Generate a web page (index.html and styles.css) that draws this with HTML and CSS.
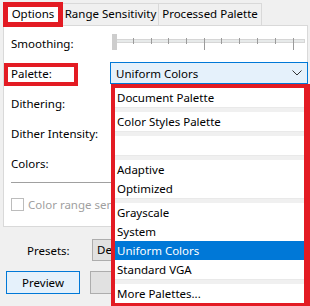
FILE: index.html
```html
<!DOCTYPE html>
<html lang="en">
<head>
  <meta charset="UTF-8" />
  <title>Indexed Color Options</title>
  <link rel="stylesheet" href="styles.css">
</head>
<body>
  <div class="dialog">
    <div class="tabs">
      <div class="tab tab-options active">Options</div>
      <div class="tab tab-range">Range Sensitivity</div>
      <div class="tab tab-processed">Processed Palette</div>
    </div>

    <div class="panel">
      <div class="row">
        <span class="label">Smoothing:</span>
        <svg class="slider" width="196" height="20" viewBox="0 0 196 20">
          <rect x="0.5" y="5.5" width="192" height="3" fill="#e7eaea" stroke="#d6d6d6" />
          <g stroke="#9b9b9b">
            <line x1="3.5" y1="4" x2="3.5" y2="10" />
            <line x1="21.5" y1="4" x2="21.5" y2="10" />
            <line x1="39.5" y1="4" x2="39.5" y2="10" />
            <line x1="56.5" y1="4" x2="56.5" y2="10" />
            <line x1="74.5" y1="4" x2="74.5" y2="10" />
            <line x1="92.5" y1="4" x2="92.5" y2="16" />
            <line x1="109.5" y1="4" x2="109.5" y2="10" />
            <line x1="127.5" y1="4" x2="127.5" y2="10" />
            <line x1="145.5" y1="4" x2="145.5" y2="10" />
            <line x1="163.5" y1="4" x2="163.5" y2="10" />
            <line x1="181.5" y1="4" x2="181.5" y2="16" />
          </g>
          <rect x="0" y="0" width="5" height="16" fill="#cdcdcd" />
        </svg>
      </div>
      <div class="row">
        <span class="label">Palette:</span>
        <div class="combo">
          <span>Uniform Colors</span>
          <svg width="10" height="6" viewBox="0 0 10 6"><path d="M0.5 0.5 L5 5 L9.5 0.5" fill="none" stroke="#333" /></svg>
        </div>
      </div>
      <div class="row"><span class="label">Dithering:</span></div>
      <div class="row"><span class="label">Dither Intensity:</span></div>
      <div class="row"><span class="label">Colors:</span></div>
      <div class="rule"></div>
      <div class="check-row">
        <span class="checkbox"></span>
        <span class="check-label">Color range sensitivity</span>
      </div>
    </div>

    <div class="footer">
      <div class="presets">
        <span class="presets-label">Presets:</span>
        <div class="preset-box">Default</div>
      </div>
      <div class="buttons">
        <button class="btn btn-default">Preview</button>
        <button class="btn btn-hidden"></button>
      </div>
    </div>
  </div>

  <div class="mark mark-options"></div>
  <div class="mark mark-palette"></div>

  <ul class="dropdown">
    <li>Document Palette</li>
    <li class="sep"></li>
    <li>Color Styles Palette</li>
    <li class="sep"></li>
    <li></li>
    <li class="sep"></li>
    <li>Adaptive</li>
    <li>Optimized</li>
    <li class="sep"></li>
    <li>Grayscale</li>
    <li>System</li>
    <li class="selected">Uniform Colors</li>
    <li>Standard VGA</li>
    <li class="sep"></li>
    <li>More Palettes...</li>
  </ul>
</body>
</html>
```

FILE: styles.css
```css
* {
  box-sizing: border-box;
  margin: 0;
  padding: 0;
}

body {
  width: 310px;
  height: 306px;
  overflow: hidden;
  position: relative;
  background: #f0f0f0;
  font-family: 'Noto Sans', 'Open Sans', sans-serif;
  font-size: 11.5px;
  color: #000;
}

.tabs {
  display: flex;
  align-items: flex-end;
  height: 25px;
  padding-left: 3px;
}

.tab {
  height: 22px;
  line-height: 20px;
  text-align: center;
  background: #f0f0f0;
  border: 1px solid #d9d9d9;
  border-bottom: none;
}

.tab.active {
  height: 24px;
  line-height: 22px;
  background: #fff;
  position: relative;
  top: 1px;
}

.tab-options { width: 60px; }
.tab-range { width: 95px; border-left: none; border-right: none; }
.tab-processed { width: 104px; }

.panel {
  margin: 0 2px 0 3px;
  background: #fff;
  border: 1px solid #d9d9d9;
  padding: 2px 0 12px 7px;
}

.row {
  display: grid;
  grid-template-columns: 99px 1fr;
  align-items: center;
  height: 30px;
}

.slider {
  display: block;
  margin-left: 2px;
  margin-top: 1px;
}

.combo {
  width: 198px;
  height: 22px;
  display: flex;
  align-items: center;
  justify-content: space-between;
  padding: 0 5px 0 5px;
  background: #e5f1fb;
  border: 1px solid #0078d7;
}

.rule {
  height: 1px;
  background: #a0a0a0;
  margin: 4px 0 0 0;
  width: 100px;
}

.check-row {
  display: flex;
  align-items: center;
  gap: 4px;
  height: 20px;
  margin-top: 11px;
}

.checkbox {
  flex: none;
  width: 13px;
  height: 13px;
  border: 1px solid #bcbcbc;
  background: #fff;
}

.check-label {
  width: 83px;
  overflow: hidden;
  color: #a0a0a0;
  white-space: nowrap;
}

.footer {
  padding: 12px 0 0 6px;
}

.presets {
  display: flex;
  align-items: center;
  height: 22px;
}

.presets-label {
  width: 86px;
  padding-left: 21px;
}

.preset-box {
  width: 20px;
  height: 22px;
  line-height: 20px;
  padding-left: 4px;
  overflow: hidden;
  white-space: nowrap;
  background: #e1e1e1;
  border: 1px solid #adadad;
  border-right: none;
}

.buttons {
  display: flex;
  gap: 10px;
  margin-top: 10px;
}

.btn {
  width: 74px;
  height: 23px;
  font: inherit;
  background: #e1e1e1;
  border: 1px solid #adadad;
}

.btn-default {
  background: #e5f1fb;
  border-color: #0078d7;
}

.btn-hidden {
  width: 22px;
  border-right: none;
}

.mark {
  position: absolute;
  border: 5px solid #e31b23;
}

.mark-options {
  left: 3px;
  top: 2px;
  width: 60px;
  height: 25px;
}

.mark-palette {
  left: 4px;
  top: 63px;
  width: 74px;
  height: 23px;
  border-width: 4px;
}

.dropdown {
  position: absolute;
  left: 111px;
  top: 84px;
  width: 199px;
  list-style: none;
  background: #fff;
  border: 4px solid #e31b23;
  border-right-width: 6px;
}

.dropdown li {
  height: 19px;
  line-height: 19px;
  padding-left: 2px;
  white-space: nowrap;
}

.dropdown li.sep {
  height: 5px;
  background: #f0f0f0;
  border-top: 1px solid #e9e9e9;
}

.dropdown li.selected {
  background: #0078d7;
  color: #fff;
}
```
